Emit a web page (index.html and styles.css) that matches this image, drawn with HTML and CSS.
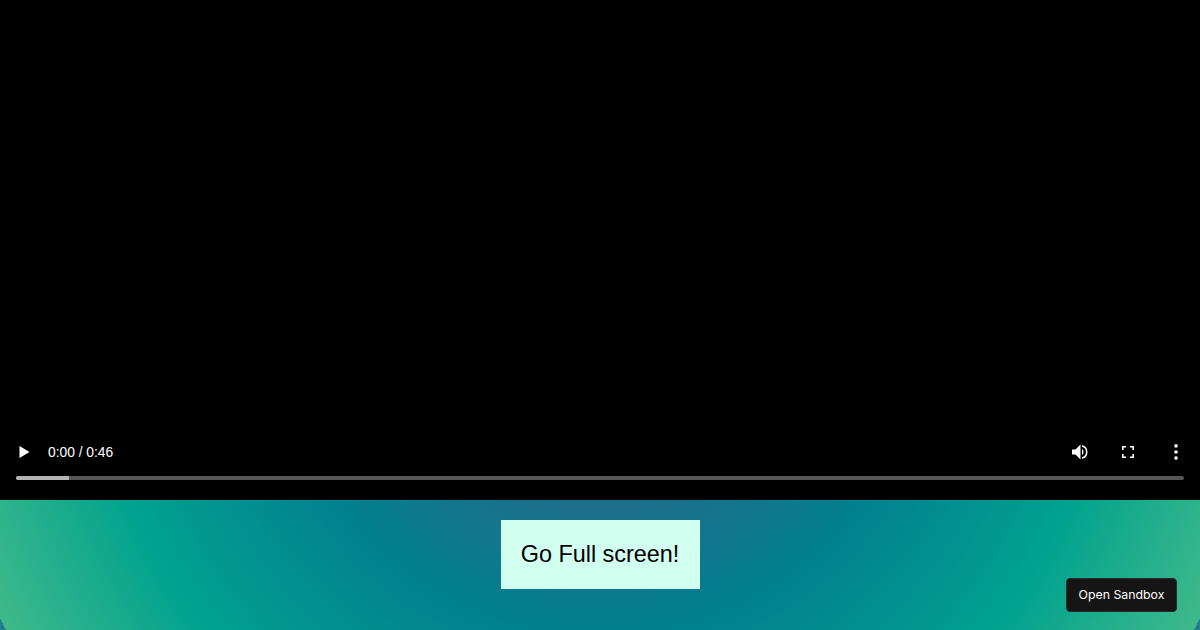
FILE: index.html
```html
<!DOCTYPE html>
<html lang="en">
<head>
<meta charset="utf-8">
<title>Go Full screen</title>
<link rel="stylesheet" href="styles.css">
</head>
<body>
<main class="page">
  <section class="video">
    <div class="controls">
      <div class="control-row">
        <svg class="icon" viewBox="0 0 24 24"><path d="M6.500 6v12l10-6z"/></svg>
        <span class="time">0:00 / 0:46</span>
        <span class="spacer"></span>
        <svg class="icon" viewBox="0 0 24 24"><path d="M4 9.500v5h3.500l5 5v-15l-5 5H4zm11.500 2.500A3.900 3.900 0 0 0 14 8.700v6.600a3.900 3.900 0 0 0 1.500-3.300zM14 5v1.800a5.400 5.400 0 0 1 0 10.400V19a7.200 7.200 0 0 0 0-14z"/></svg>
        <svg class="icon icon-line" viewBox="0 0 24 24"><path d="M6.800 10V6.800H10M14 6.800h3.200V10M17.200 14v3.200H14M10 17.200H6.800V14"/></svg>
        <svg class="icon" viewBox="0 0 24 24"><path d="M12 7.700a1.800 1.800 0 1 0 0-3.600 1.800 1.800 0 0 0 0 3.600zm0 2.500a1.800 1.800 0 1 0 0 3.600 1.800 1.800 0 0 0 0-3.600zm0 6.100a1.800 1.800 0 1 0 0 3.600 1.800 1.800 0 0 0 0-3.600z"/></svg>
      </div>
      <div class="track"><div class="buffered"></div></div>
    </div>
  </section>
  <section class="stage">
    <button class="fullscreen">Go Full screen!</button>
    <a class="sandbox">Open Sandbox</a>
  </section>
</main>
</body>
</html>
```
FILE: styles.css
```css
* { box-sizing: border-box; }
html, body { margin: 0; height: 100%; }
body { font-family: "Liberation Sans", Arial, sans-serif; overflow: hidden; }
.page {
  height: 630px;
  display: flex;
  flex-direction: column;
  background: radial-gradient(circle farthest-corner at 50% 50%, #465687 0%, #028090 47%, #01a28f 74.5%, #3fb98a 99.2%, #1f7f90 99.2%, #1f7f90 100%);
}
.video {
  height: 500px;
  background: #000;
  display: flex;
  flex-direction: column;
  justify-content: flex-end;
}
.controls { padding: 0 16px 20px; }
.control-row {
  display: flex;
  align-items: center;
  height: 24px;
  margin-bottom: 12px;
  color: #fff;
}
.icon { width: 24px; height: 24px; fill: #fff; flex: none; }
.icon-line { fill: none; stroke: #fff; stroke-width: 1.6; }
.control-row .icon:nth-of-type(1) { margin-left: -3px; }
.control-row .icon:nth-of-type(3) { margin-left: 24px; }
.control-row .icon:nth-of-type(4) { margin-left: 24px; margin-right: -4px; }
.time { font: 13.8px "Liberation Sans", Arial, sans-serif; margin-left: 11px; }
.spacer { flex: 1; }
.track { height: 4px; border-radius: 2px; background: #565656; overflow: hidden; }
.buffered { width: 53px; height: 100%; background: #b3b3b3; }
.stage {
  position: relative;
  flex: 1;
  display: flex;
  justify-content: center;
  padding-top: 20px;
}
.fullscreen {
  width: 199px;
  height: 69px;
  border: 0;
  padding: 0;
  background: #d1fff0;
  color: #000;
  font: 23.4px "Liberation Sans", Arial, sans-serif;
}
.sandbox {
  position: absolute;
  right: 23px;
  bottom: 18px;
  width: 111px;
  height: 34px;
  padding-bottom: 1px;
  display: flex;
  align-items: center;
  justify-content: center;
  background: #151515;
  border: 1px solid #2b2b2b;
  border-radius: 4px;
  color: #fff;
  font: 12.3px Inter, sans-serif;
}
```
